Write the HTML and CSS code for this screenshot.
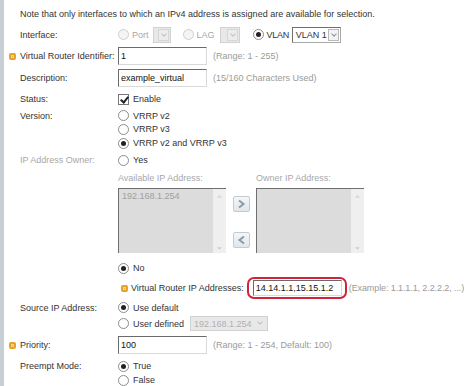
FILE: index.html
```html
<!DOCTYPE html>
<html lang="en">
<head>
  <meta charset="UTF-8">
  <title>Add VRRP Group</title>
  <link rel="stylesheet" href="styles.css">
</head>
<body>
  <div class="page">
    <div class="note">Note that only interfaces to which an IPv4 address is assigned are available for selection.</div>

    <!-- interface -->
    <div class="row r-iface">
      <span class="label">Interface:</span>
      <span class="radio off"></span><span class="opt dim">Port</span>
      <span class="sel small dis"><span class="arrow"></span></span>
      <span class="radio off lag"></span><span class="opt dim">LAG</span>
      <span class="sel small lag-sel dis"><span class="arrow"></span></span>
      <span class="radio on vlan"></span><span class="opt vlan-text">VLAN</span>
      <span class="sel vlan-sel"><span class="sel-text">VLAN 1</span><span class="arrow"></span></span>
    </div>

    <div class="row r-field">
      <span class="label"><span class="star"></span>Virtual Router Identifier:</span>
      <span class="input">1</span>
      <span class="hint">(Range: 1 - 255)</span>
    </div>

    <div class="row r-field">
      <span class="label">Description:</span>
      <span class="input">example_virtual</span>
      <span class="hint">(15/160 Characters Used)</span>
    </div>

    <div class="row r-status">
      <span class="label">Status:</span>
      <span class="check"></span><span class="opt">Enable</span>
    </div>

    <div class="row r-sub first">
      <span class="label">Version:</span>
      <span class="radio off"></span><span class="opt">VRRP v2</span>
    </div>
    <div class="row r-sub">
      <span class="label"></span>
      <span class="radio off"></span><span class="opt">VRRP v3</span>
    </div>
    <div class="row r-sub">
      <span class="label"></span>
      <span class="radio on"></span><span class="opt">VRRP v2 and VRRP v3</span>
    </div>

    <div class="row r-owner">
      <span class="label dim">IP Address Owner:</span>
      <span class="radio off"></span><span class="opt">Yes</span>
    </div>

    <div class="lists">
      <div class="list-col">
        <div class="list-title">Available IP Address:</div>
        <div class="listbox">
          <span class="list-item">192.168.1.254</span>
          <span class="scroll"><span class="up">&#94;</span><span class="down">&#8964;</span></span>
        </div>
      </div>
      <div class="movers">
        <span class="mv">
          <svg width="9" height="10" viewBox="0 0 9 10"><path d="M2 1.5 L6.5 5 L2 8.5" fill="none" stroke="#8b9aa5" stroke-width="2"/></svg>
        </span>
        <span class="mv">
          <svg width="9" height="10" viewBox="0 0 9 10"><path d="M7 1.5 L2.5 5 L7 8.5" fill="none" stroke="#8b9aa5" stroke-width="2"/></svg>
        </span>
      </div>
      <div class="list-col">
        <div class="list-title">Owner IP Address:</div>
        <div class="listbox">
          <span class="list-item"></span>
          <span class="scroll"><span class="up">&#94;</span><span class="down">&#8964;</span></span>
        </div>
      </div>
    </div>

    <div class="row r-no">
      <span class="label"></span>
      <span class="radio on"></span><span class="opt">No</span>
    </div>

    <div class="row r-vrip">
      <span class="label"></span>
      <span class="star inner"></span><span class="vrip-label">Virtual Router IP Addresses:</span>
      <span class="mark"><span class="input vrip">14.14.1.1,15.15.1.2</span></span>
      <span class="hint tight">(Example: 1.1.1.1, 2.2.2.2, ...)</span>
    </div>

    <div class="row r-src">
      <span class="label">Source IP Address:</span>
      <span class="radio on"></span><span class="opt">Use default</span>
    </div>
    <div class="row r-user">
      <span class="label"></span>
      <span class="radio off"></span><span class="opt">User defined</span>
      <span class="sel ip-sel dis"><span class="sel-text">192.168.1.254</span><span class="arrow flat"></span></span>
    </div>

    <div class="row r-prio">
      <span class="label"><span class="star"></span>Priority:</span>
      <span class="input">100</span>
      <span class="hint">(Range: 1 - 254, Default: 100)</span>
    </div>

    <div class="row r-pre">
      <span class="label">Preempt Mode:</span>
      <span class="radio on"></span><span class="opt">True</span>
    </div>
    <div class="row r-false">
      <span class="label"></span>
      <span class="radio off"></span><span class="opt">False</span>
    </div>
  </div>
</body>
</html>
```

FILE: styles.css
```css
body {
  margin: 0;
  font-family: "Liberation Sans", Arial, sans-serif;
  font-size: 9px;
  color: #333;
  background: #fff;
}
.page {
  height: 386px;
  border-left: 4px solid #c8d0d5;
  padding-left: 16px;
  overflow: hidden;
}
.note {
  padding-top: 4px;
  height: 20px;
  line-height: 20px;
}
.row {
  display: flex;
  align-items: center;
  white-space: nowrap;
}
.label {
  width: 98px;
  flex: none;
  display: flex;
  align-items: center;
}
.dim {
  color: #a8a8a8;
}
.opt {
  margin-left: 4px;
}
.hint {
  color: #9a9a9a;
  margin-left: 6px;
}
.hint.tight {
  margin-left: 2px;
  letter-spacing: -0.1px;
}

/* row heights */
.r-iface { height: 21px; }
.r-field { height: 22px; }
.r-status { height: 20px; }
.r-sub { height: 14px; }
.r-sub.first { height: 13px; }
.r-owner { height: 20px; }
.r-no { height: 20px; margin-top: 5px; }
.r-vrip { height: 20px; }
.r-src { height: 19px; }
.r-user { height: 13px; }
.r-prio { height: 20px; margin-top: 5px; }
.r-pre { height: 16px; margin-top: 3px; }
.r-false { height: 12px; }

/* controls */
.radio {
  width: 11px;
  height: 11px;
  box-sizing: border-box;
  border: 1px solid #8c8c8c;
  border-radius: 50%;
  background: #fff;
  flex: none;
  position: relative;
}
.radio.on::after {
  content: "";
  position: absolute;
  left: 2px;
  top: 2px;
  width: 5px;
  height: 5px;
  border-radius: 50%;
  background: #222;
}
.r-iface .opt {
  margin-left: 3px;
}
.r-iface .radio.off {
  border-color: #cfcfcf;
  background: #f4f4f4;
}
.r-iface .radio.lag {
  margin-left: 12px;
}
.r-iface .radio.vlan {
  margin-left: 13px;
}
.r-iface .vlan-text {
  letter-spacing: -0.3px;
}
.check {
  width: 11px;
  height: 11px;
  box-sizing: border-box;
  border: 1px solid #777;
  background: #fff;
  flex: none;
  position: relative;
}
.check::after {
  content: "";
  position: absolute;
  left: 3px;
  top: 0;
  width: 3px;
  height: 6px;
  border: solid #222;
  border-width: 0 2px 2px 0;
  transform: rotate(40deg);
}
.sel {
  display: flex;
  align-items: center;
  height: 16px;
  box-sizing: border-box;
  border: 1px solid #a9a9a9;
  border-top-color: #6f6f6f;
  border-left-color: #6f6f6f;
  background: #fff;
  margin-left: 4px;
}
.sel.small {
  width: 18px;
  justify-content: flex-end;
}
.sel.lag-sel {
  width: 20px;
  margin-left: 5px;
}
.sel.dis {
  border-color: #d2d2d2;
  background: #e8e8e8;
}
.sel-text {
  padding-left: 3px;
  flex: 1;
}
.vlan-sel {
  width: 49px;
  margin-left: 3px;
}
.arrow {
  width: 11px;
  height: 12px;
  box-sizing: border-box;
  border: 1px solid #b9b9b9;
  background: #f3f3f3;
  margin-right: 1px;
  position: relative;
  flex: none;
}
.arrow::after {
  content: "";
  position: absolute;
  left: 3px;
  top: 2px;
  width: 3px;
  height: 3px;
  border: solid #7f98b0;
  border-width: 0 1px 1px 0;
  transform: rotate(45deg);
}
.sel.dis .arrow {
  border-color: #d6d6d6;
  background: #ececec;
}
.sel.dis .arrow::after {
  border-color: #b8c4cf;
}
.ip-sel {
  width: 78px;
  height: 15px;
  margin-left: 6px;
  color: #b0b0b0;
}
.ip-sel .arrow.flat {
  border: 0;
  background: transparent;
}
.input {
  display: block;
  width: 89px;
  height: 18px;
  line-height: 16px;
  box-sizing: border-box;
  border: 1px solid #d9d9d9;
  border-top-color: #6a6a6a;
  border-left-color: #6a6a6a;
  padding-left: 2px;
  color: #111;
  flex: none;
}
.input.vrip {
  height: 16px;
  line-height: 14px;
}

/* required marker */
.star {
  width: 7px;
  height: 7px;
  box-sizing: border-box;
  border-radius: 2px;
  background: #f1b03c;
  border: 2px solid #e8a028;
  box-shadow: inset 0 0 0 1px #f8d480;
  margin-left: -11px;
  margin-right: 4px;
  flex: none;
}
.star.inner {
  margin-left: 3px;
  margin-right: 3px;
}
.mark {
  display: block;
  margin-left: 3px;
  padding: 1px 3px 1px 4px;
  border: 2px solid #d0243c;
  border-radius: 7px;
}

/* ip lists */
.lists {
  display: flex;
  margin-left: 98px;
}
.list-title {
  height: 16px;
  line-height: 16px;
  color: #a8a8a8;
  margin-bottom: 2px;
}
.listbox {
  display: flex;
  width: 108px;
  height: 65px;
  box-sizing: border-box;
  border-top: 1px solid #6f6f6f;
  border-left: 1px solid #6f6f6f;
  background: #dcdcdc;
}
.list-item {
  flex: 1;
  color: #9f9f9f;
  padding: 2px 0 0 3px;
}
.scroll {
  width: 13px;
  background: #efefef;
  display: flex;
  flex-direction: column;
  justify-content: space-between;
  align-items: center;
  color: #b5b5b5;
  font-size: 8px;
  line-height: 10px;
  padding: 4px 0 1px;
}
.movers {
  width: 30px;
  display: flex;
  flex-direction: column;
  align-items: center;
  padding-top: 26px;
  gap: 20px;
}
.mv {
  width: 17px;
  height: 16px;
  box-sizing: border-box;
  border: 1px solid #c2cbd1;
  border-radius: 2px;
  background: linear-gradient(#f4f7f9, #e0e6ea);
  display: flex;
  align-items: center;
  justify-content: center;
}
```
